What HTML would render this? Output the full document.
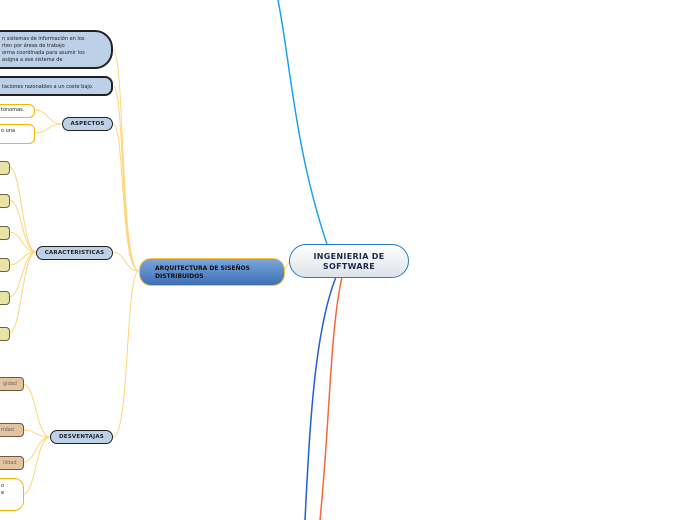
<!DOCTYPE html><html><head><style>
body{margin:0;width:696px;height:520px;background:#fff;position:relative;overflow:hidden;font-family:"DejaVu Sans","Liberation Sans",sans-serif}
.b{position:absolute;box-sizing:border-box;font-size:5px;color:#222;line-height:7px}
.blue{background:#bcd0e8;border:2px solid #222;border-radius:8px}
.n{font-weight:bold;font-size:5.5px;text-align:center;letter-spacing:.2px}
.y{background:#e8e4a8;border:1.5px solid #6b6240;border-radius:4px}
.o{background:#fff;border:1.5px solid #f5b800;border-radius:6px}
.br{background:#e3c3a0;border:1.5px solid #6b5a45;border-radius:4px;color:#666}
</style></head><body>
<svg width="696" height="520" style="position:absolute;left:0;top:0">
<g fill="none" stroke="#fdd577" stroke-width="1">
<path d="M113 50 C125 50,120 270,139 271"/>
<path d="M113 86 C125 86,120 270,139 271"/>
<path d="M113 124 C125 124,120 270,139 271"/>
<path d="M113 252 C125 252,125 271,139 271"/>
<path d="M113 437 C130 437,125 271,139 271"/>
<path d="M35 110 C48 110,48 124,62 124"/><path d="M35 133 C48 133,48 124,62 124"/>
<path d="M9 167 C22 167,22 252,36 252"/><path d="M9 200 C22 200,22 252,36 252"/><path d="M9 232 C22 232,22 252,36 252"/>
<path d="M9 265 C22 265,22 252,36 252"/><path d="M9 297 C22 297,22 252,36 252"/><path d="M9 333 C22 333,22 252,36 252"/>
<path d="M23 384 C36 384,36 437,50 437"/><path d="M23 430 C36 430,36 437,50 437"/><path d="M23 462 C36 462,36 437,50 437"/><path d="M23 494 C36 494,36 437,50 437"/>
<path d="M284 271 L289 262"/>
</g>
<path d="M278 0 C290 60,295 150,327 244" stroke="#1aa3ef" stroke-width="1.5" fill="none"/>
<path d="M336 277 C315 330,310 420,305 520" stroke="#1f5fd0" stroke-width="1.5" fill="none"/>
<path d="M342 277 C330 330,330 420,320 520" stroke="#f06a3a" stroke-width="1.5" fill="none"/>
</svg>
<div class="b blue" style="left:-20px;top:30px;width:133px;height:39px;border-radius:18px;padding:4px 0 0 20px">n sistemas de información en los<br>rten por áreas de trabajo<br>orma coordinada para asumir los<br>asigna a ese sistema de</div>
<div class="b blue" style="left:-20px;top:76px;width:133px;height:20px;padding:6px 0 0 20px">taciones razonables a un coste bajo.</div>
<div class="b o" style="left:-10px;top:104px;width:45px;height:14px;padding:2px 0 0 10px">tónomas.</div>
<div class="b o" style="left:-10px;top:124px;width:45px;height:20px;padding:3px 0 0 10px">o una</div>
<div class="b blue n" style="left:62px;top:117px;width:51px;height:14px;border-width:1.5px;padding-top:2.5px">ASPECTOS</div>
<div class="b y" style="left:-10px;top:161px;width:20px;height:14px"></div>
<div class="b y" style="left:-10px;top:194px;width:20px;height:14px"></div>
<div class="b y" style="left:-10px;top:226px;width:20px;height:14px"></div>
<div class="b y" style="left:-10px;top:258px;width:20px;height:14px"></div>
<div class="b y" style="left:-10px;top:291px;width:20px;height:14px"></div>
<div class="b y" style="left:-10px;top:327px;width:20px;height:14px"></div>
<div class="b blue n" style="left:36px;top:246px;width:77px;height:14px;border-width:1.5px;padding-top:2.5px">CARACTERISTICAS</div>
<div class="b" style="left:139px;top:258px;width:146px;height:28px;border:1.5px solid #f5c542;border-radius:12px;background:linear-gradient(#7aa6dc,#3f6fb6);font-weight:bold;font-size:6px;color:#111;padding:6px 0 0 15px;line-height:8px">ARQUITECTURA DE SISEÑOS<br>DISTRIBUIDOS</div>
<div class="b" style="left:289px;top:244px;width:120px;height:34px;border:1px solid #2a7ac0;border-radius:17px;background:linear-gradient(#fff,#dde3ea);font-weight:bold;font-size:8px;color:#1b2a4a;text-align:center;padding-top:7px;line-height:10px;letter-spacing:.3px">INGENIERIA DE<br>SOFTWARE</div>
<div class="b br" style="left:-20px;top:377px;width:44px;height:14px;padding:3px 0 0 22px">gidad</div>
<div class="b br" style="left:-20px;top:423px;width:44px;height:14px;padding:3px 0 0 20px">ridad</div>
<div class="b br" style="left:-20px;top:456px;width:44px;height:14px;padding:3px 0 0 22px">ilidad</div>
<div class="b o" style="left:-20px;top:478px;width:44px;height:33px;border-width:1.5px;border-radius:10px;padding:4px 0 0 20px">o<br>e</div>
<div class="b blue n" style="left:50px;top:430px;width:63px;height:14px;border-width:1.5px;padding-top:2.5px">DESVENTAJAS</div>
</body></html>
